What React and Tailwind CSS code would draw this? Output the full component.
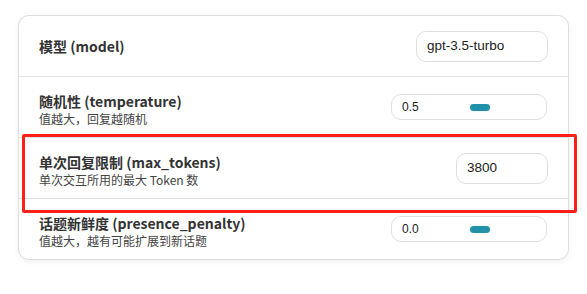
import React from "react";

const cjk = { fontFamily: '"Noto Sans CJK SC", "Noto Sans", sans-serif' };
const arial = { fontFamily: '"Liberation Sans", Arial, sans-serif' };

function Row({ title, sub, children, last }) {
  return (
    <div className={`flex items-center justify-between pl-5 pr-5 ${last ? "h-[60px]" : "h-[61px] border-b border-[#e2e2e2]"}`}>
      <div className={`flex flex-col ${sub ? "pt-[5px]" : ""}`} style={cjk}>
        <div className="text-[14px] font-bold leading-[18px] text-[#333]">{title}</div>
        {sub && <div className="text-[12px] leading-[18px] text-[#444]">{sub}</div>}
      </div>
      {children}
    </div>
  );
}

function TextBox({ w, value }) {
  return (
    <div
      className={`flex h-[31px] ${w} items-center rounded-[10px] border border-[#dedede] pl-[10px] text-[13.5px] text-[#222]`}
      style={arial}
    >
      {value}
    </div>
  );
}

function RangeBox({ value }) {
  return (
    <div
      className="mr-px flex h-[26px] w-[156px] items-center rounded-[10px] border border-[#dedede] pl-[10px] text-[12px] text-[#222]"
      style={arial}
    >
      <span className="w-[68px]">{value}</span>
      <span className="h-[7px] w-[20px] rounded-full bg-[#1f92aa]" />
    </div>
  );
}

export default function App() {
  return (
    <div className="relative h-[294px] w-[587px] bg-white">
      <div className="pl-[18px] pt-[15px]">
        <div className="w-[551px] overflow-hidden rounded-[11px] border border-[#dedede] bg-white shadow-[0_2px_5px_rgba(0,0,0,0.06)]">
          <Row title="模型 (model)">
            <TextBox w="w-[132px]" value="gpt-3.5-turbo" />
          </Row>
          <Row title="随机性 (temperature)" sub="值越大，回复越随机">
            <RangeBox value="0.5" />
          </Row>
          <Row title="单次回复限制 (max_tokens)" sub="单次交互所用的最大 Token 数">
            <TextBox w="w-[92px]" value="3800" />
          </Row>
          <Row title="话题新鲜度 (presence_penalty)" sub="值越大，越有可能扩展到新话题" last>
            <RangeBox value="0.0" />
          </Row>
        </div>
      </div>
      <div className="pointer-events-none absolute left-[22px] top-[134px] h-[79px] w-[555px] rounded-[2px] border-[3px] border-[#fd2018]" />
    </div>
  );
}
